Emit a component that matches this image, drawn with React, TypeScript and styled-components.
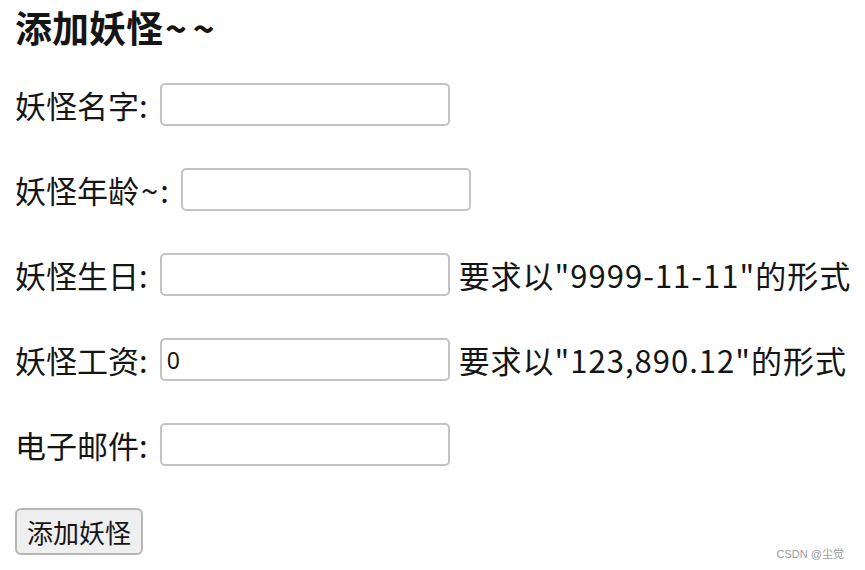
import React from 'react';
import styled, { createGlobalStyle } from 'styled-components';

const GlobalStyle = createGlobalStyle`
  html, body {
    margin: 0;
    padding: 0;
    background: #fff;
  }
  body {
    font-family: "Noto Sans CJK SC", "Noto Sans", sans-serif;
    color: #151515;
  }
`;

const Page = styled.div`
  position: relative;
  width: 865px;
  height: 570px;
  padding: 0 0 0 15px;
  box-sizing: border-box;
  overflow: hidden;
`;

const Title = styled.h1`
  margin: 0;
  padding-top: 3px;
  font-size: 37px;
  line-height: 48px;
  font-weight: 700;
  white-space: nowrap;
`;

const Tildes = styled.span`
  letter-spacing: 6px;
  margin-left: 2px;
`;

const Form = styled.form`
  display: flex;
  flex-direction: column;
  align-items: flex-start;
  gap: 42px;
  margin-top: 32px;
`;

const Row = styled.div`
  display: flex;
  align-items: center;
  height: 43px;
`;

const Label = styled.label`
  font-size: 31px;
  line-height: 43px;
  white-space: nowrap;
  margin-right: 12px;
`;

const Tilde = styled.span`
  margin: 0 2px;
`;

const Field = styled.input`
  width: 290px;
  height: 43px;
  box-sizing: border-box;
  border: 2px solid #c3c3c3;
  border-radius: 5px;
  background: #fff;
  padding: 0 5px;
  font-family: "Noto Sans", sans-serif;
  font-size: 23px;
  color: #151515;
  outline: none;
`;

const Hint = styled.span`
  font-size: 31px;
  line-height: 43px;
  letter-spacing: 1px;
  margin-left: 9px;
  white-space: nowrap;
`;

const Submit = styled.button`
  width: 128px;
  height: 47px;
  padding: 0;
  border: 2px solid #b6b6b6;
  border-radius: 6px;
  background: #efefef;
  font-family: "Noto Sans CJK SC", sans-serif;
  font-size: 26px;
  color: #151515;
`;

const Watermark = styled.span`
  position: absolute;
  right: 21px;
  bottom: 9px;
  font-size: 11px;
  color: #9a9a9a;
  font-family: "Liberation Sans", "Noto Sans CJK SC", sans-serif;
`;

const rows: { label: React.ReactNode; id: string; value: string; hint: string }[] = [
  { id: 'name', label: '妖怪名字:', value: '', hint: '' },
  { id: 'age', label: <>妖怪年龄<Tilde>~</Tilde>:</>, value: '', hint: '' },
  { id: 'birthday', label: '妖怪生日:', value: '', hint: '要求以"9999-11-11"的形式' },
  { id: 'salary', label: '妖怪工资:', value: '0', hint: '要求以"123,890.12"的形式' },
  { id: 'email', label: '电子邮件:', value: '', hint: '' },
];

export default function App() {
  return (
    <Page>
      <GlobalStyle />
      <Title>
        添加妖怪<Tildes>~~</Tildes>
      </Title>
      <Form onSubmit={(e) => e.preventDefault()}>
        {rows.map((r) => (
          <Row key={r.id}>
            <Label htmlFor={r.id}>{r.label}</Label>
            <Field id={r.id} type="text" defaultValue={r.value} />
            {r.hint && <Hint>{r.hint}</Hint>}
          </Row>
        ))}
        <Submit type="submit">添加妖怪</Submit>
      </Form>
      <Watermark>CSDN @尘觉</Watermark>
    </Page>
  );
}
